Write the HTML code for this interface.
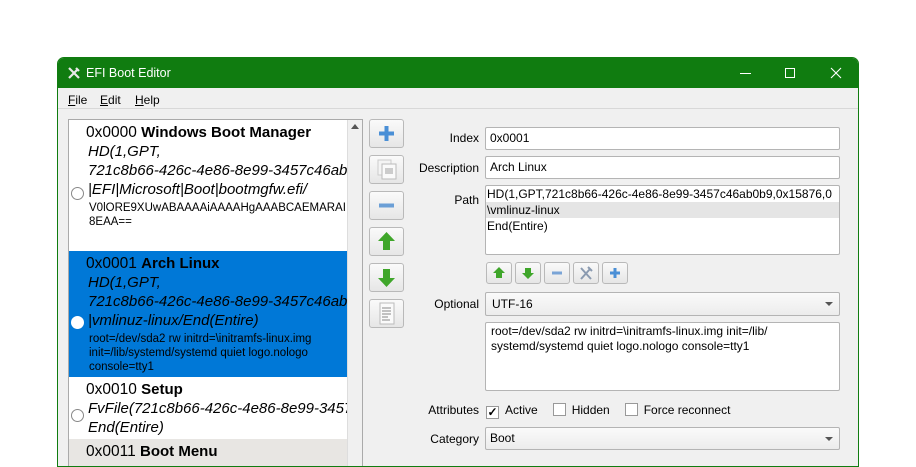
<!DOCTYPE html>
<html><head><style>
*{box-sizing:border-box;margin:0;padding:0}
body{width:916px;height:458px;background:#fff;position:relative;overflow:hidden;font-family:"Liberation Sans",sans-serif;font-size:12px;color:#000}
.a{position:absolute}
.win{left:57px;top:57px;width:802px;height:410px;background:#f0f0f0;border:1px solid #107c10;border-radius:7px 7px 0 0;overflow:hidden}
.title{left:0;top:0;width:802px;height:30px;background:#107c10;color:#fff;font-size:12.5px}
.btn{background:linear-gradient(#fafafa,#e6e6e6);border:1px solid #b9b9b9;border-radius:3px}
.inp{background:#fff;border:1px solid #b4b4b4;border-radius:2px;padding-left:4px;line-height:20px;font-size:12px}
.lbl{text-align:right;width:100px;left:379px;font-size:12px}
.it{position:absolute;left:0;width:278px;overflow:hidden;white-space:nowrap}
.it .h{font-size:15.5px;margin-left:17px;line-height:19px}
.it .h b{font-size:15px}
.it .i{font-style:italic;font-size:15px;margin-left:19px;line-height:19px}
.it .s{font-size:11.5px;margin-left:20px;line-height:14px}
.rad{position:absolute;left:2px;width:13px;height:13px;border-radius:50%;border:1px solid #888;background:#fff}
.cb{display:inline-block;width:13px;height:13px;border:1px solid #999;background:#fff;vertical-align:-2px;margin-right:6px}
.sb{width:26px;height:22px}
</style></head><body>
<div class="a win">
 <div class="a title">
  <svg class="a" style="left:9px;top:8px" width="14" height="14" viewBox="0 0 14 14"><path d="M2 12L10 4M9 2l3 3M2 2l10 10" stroke="#e8e8e8" stroke-width="2.2" fill="none"/></svg>
  <span class="a" style="left:28px;top:8px">EFI Boot Editor</span>
  <div class="a" style="left:682px;top:15px;width:11px;height:1px;background:#fff"></div>
  <div class="a" style="left:727px;top:10px;width:10px;height:10px;border:1px solid #fff"></div>
  <svg class="a" style="left:772px;top:9px" width="12" height="12"><path d="M1 1L11 11M11 1L1 11" stroke="#fff" stroke-width="1.1"/></svg>
 </div>
 <div class="a" style="left:0;top:30px;width:802px;height:21px;border-bottom:1px solid #d8d8d8;font-size:12px">
  <span class="a" style="left:10px;top:5px"><u>F</u>ile</span>
  <span class="a" style="left:42px;top:5px"><u>E</u>dit</span>
  <span class="a" style="left:77px;top:5px"><u>H</u>elp</span>
 </div>
 <div class="a" style="left:10px;top:61px;width:295px;height:350px;background:#fff;border:1px solid #aaa;overflow:hidden">
  <div class="a" style="left:278px;top:0;width:16px;height:350px;background:#f0f0f0;border-left:1px solid #ddd"></div>
  <div class="a" style="left:282px;top:4px;width:0;height:0;border:4px solid transparent;border-bottom:5px solid #555;border-top:0"></div>
  <div class="it" style="top:0;height:131px">
   <div class="h" style="margin-top:3px">0x0000 <b>Windows Boot Manager</b></div>
   <div class="i">HD(1,GPT,</div><div class="i">721c8b66-426c-4e86-8e99-3457c46ab0b9</div><div class="i">|EFI|Microsoft|Boot|bootmgfw.efi/</div>
   <div class="s" style="margin-top:2px">V0lORE9XUwABAAAAiAAAAHgAAABCAEMARAI</div><div class="s">8EAA==</div>
   <div class="rad" style="top:67px"></div>
  </div>
  <div class="it" style="top:131px;height:126px;background:#0078d7">
   <div class="h" style="margin-top:3px">0x0001 <b>Arch Linux</b></div>
   <div class="i">HD(1,GPT,</div><div class="i">721c8b66-426c-4e86-8e99-3457c46ab0b9</div><div class="i">|vmlinuz-linux/End(Entire)</div>
   <div class="s" style="margin-top:2px">root=/dev/sda2 rw initrd=\initramfs-linux.img</div><div class="s">init=/lib/systemd/systemd quiet logo.nologo</div><div class="s">console=tty1</div>
   <div class="rad" style="top:65px;border-color:#fff"></div>
  </div>
  <div class="it" style="top:257px;height:62px">
   <div class="h" style="margin-top:3px">0x0010 <b>Setup</b></div>
   <div class="i">FvFile(721c8b66-426c-4e86-8e99-3457c46ab0b9)/</div><div class="i">End(Entire)</div>
   <div class="rad" style="top:32px"></div>
  </div>
  <div class="it" style="top:319px;height:40px;background:#e8e6e3">
   <div class="h" style="margin-top:3px">0x0011 <b>Boot Menu</b></div>
  </div>
 </div>
 <div class="a btn" style="left:311px;top:61px;width:35px;height:29px"><svg width="33" height="27"><path d="M16.5 6v15M9 13.5h15" stroke="#4a8fd6" stroke-width="4"/></svg></div>
 <div class="a btn" style="left:311px;top:97px;width:35px;height:29px"><svg width="33" height="27"><rect x="8" y="4" width="13" height="15" fill="#f4f4f4" stroke="#ccc"/><rect x="12" y="8" width="14" height="15" fill="#fafafa" stroke="#bbb"/><rect x="15" y="12" width="8" height="6" fill="#ccc"/></svg></div>
 <div class="a btn" style="left:311px;top:133px;width:35px;height:29px"><svg width="33" height="27"><path d="M9 13.5h15" stroke="#6b9fd6" stroke-width="4"/></svg></div>
 <div class="a btn" style="left:311px;top:169px;width:35px;height:29px"><svg width="33" height="27"><path d="M16.5 4L25 13h-5v9h-7v-9H8z" fill="#3fa62a"/></svg></div>
 <div class="a btn" style="left:311px;top:205px;width:35px;height:29px"><svg width="33" height="27"><path d="M16.5 23L25 14h-5V5h-7v9H8z" fill="#3fa62a"/></svg></div>
 <div class="a btn" style="left:311px;top:241px;width:35px;height:29px"><svg width="33" height="27"><rect x="10" y="3" width="14" height="21" fill="#fafafa" stroke="#bbb"/><path d="M12 8h9M12 11h9M12 14h9M12 17h6M12 20h8" stroke="#888"/></svg></div>
</div>
<div class="a lbl" style="top:131px">Index</div>
<div class="a inp" style="left:485px;top:127px;width:355px;height:23px">0x0001</div>
<div class="a lbl" style="top:161px">Description</div>
<div class="a inp" style="left:485px;top:156px;width:355px;height:23px">Arch Linux</div>
<div class="a lbl" style="top:193px">Path</div>
<div class="a inp" style="left:485px;top:185px;width:355px;height:70px;padding:0;line-height:16px;overflow:hidden;white-space:nowrap">
 <div style="padding-left:1px">HD(1,GPT,721c8b66-426c-4e86-8e99-3457c46ab0b9,0x15876,0</div>
 <div style="background:#e5e5e5;padding-left:1px">\vmlinuz-linux</div>
 <div style="padding-left:1px">End(Entire)</div>
</div>
<div class="a btn sb" style="left:486px;top:262px"><svg width="24" height="20"><path d="M12 4l6 6h-3v5h-6v-5H6z" fill="#3fa62a"/></svg></div>
<div class="a btn sb" style="left:515px;top:262px"><svg width="24" height="20"><path d="M12 16l6-6h-3V5h-6v5H6z" fill="#3fa62a"/></svg></div>
<div class="a btn sb" style="left:544px;top:262px"><svg width="24" height="20"><path d="M7 10h10" stroke="#7aa4d6" stroke-width="3"/></svg></div>
<div class="a btn sb" style="left:573px;top:262px"><svg width="24" height="20"><path d="M7 16L16 6M14 4l4 4M7 5l10 11" stroke="#8a9ab0" stroke-width="2"/></svg></div>
<div class="a btn sb" style="left:602px;top:262px"><svg width="24" height="20"><path d="M12 5v10M7 10h10" stroke="#4a8fd6" stroke-width="3"/></svg></div>
<div class="a lbl" style="top:297px">Optional</div>
<div class="a inp" style="left:485px;top:292px;width:355px;height:24px;background:linear-gradient(#fafafa,#ececec);padding-left:6px;line-height:22px">UTF-16<div class="a" style="right:6px;top:9px;border:4px solid transparent;border-top:4px solid #555;border-bottom:0"></div></div>
<div class="a inp" style="left:485px;top:322px;width:355px;height:69px;line-height:15px;padding:1px 5px">root=/dev/sda2 rw initrd=\initramfs-linux.img init=/lib/<br>systemd/systemd quiet logo.nologo console=tty1</div>
<div class="a lbl" style="top:403px">Attributes</div>
<div class="a" style="left:486px;top:403px;white-space:nowrap"><span class="cb" style="text-align:center;line-height:11px;font-size:12px;font-weight:bold">✓</span>Active<span class="cb" style="margin-left:15px"></span>Hidden<span class="cb" style="margin-left:15px"></span>Force reconnect</div>
<div class="a lbl" style="top:432px">Category</div>
<div class="a inp" style="left:485px;top:427px;width:355px;height:23px;background:linear-gradient(#fafafa,#ececec);line-height:21px">Boot<div class="a" style="right:6px;top:9px;border:4px solid transparent;border-top:4px solid #555;border-bottom:0"></div></div>
</body></html>
